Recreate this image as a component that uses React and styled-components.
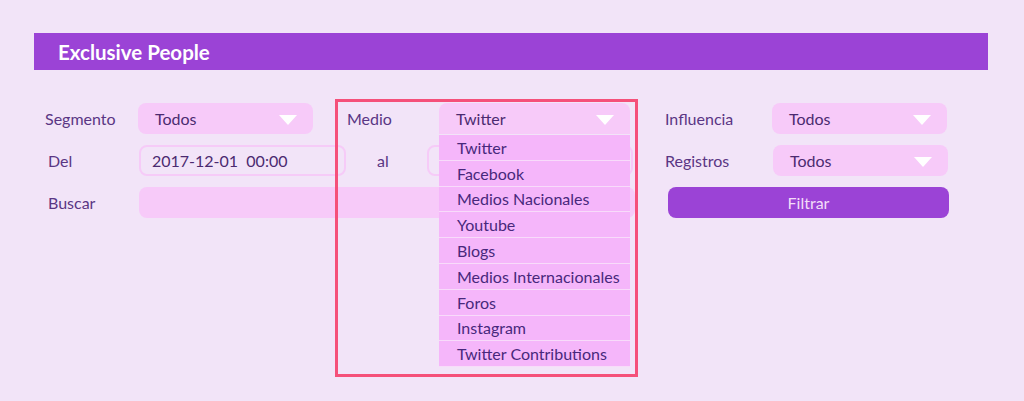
import styled, { createGlobalStyle } from "styled-components";

const GlobalStyle = createGlobalStyle`
  html, body {
    margin: 0;
    padding: 0;
    background: #f2e4f8;
    font-family: Lato, "Open Sans", sans-serif;
  }
`;

const medios = [
  "Twitter",
  "Facebook",
  "Medios Nacionales",
  "Youtube",
  "Blogs",
  "Medios Internacionales",
  "Foros",
  "Instagram",
  "Twitter Contributions",
];

const Page = styled.div`
  position: relative;
  width: 1024px;
  height: 401px;
  padding-top: 33px;
  box-sizing: border-box;
`;

const TitleBar = styled.div`
  margin: 0 36px 0 34px;
  height: 37px;
  background: #9b43d6;
  color: #fff;
  font-weight: 700;
  font-size: 20.5px;
  display: flex;
  align-items: center;
  padding-left: 24px;
`;

const Form = styled.div`
  margin-top: 33px;
  display: flex;
  flex-direction: column;
  gap: 11px;
`;

const Row = styled.div`
  display: flex;
  align-items: center;
  height: 31px;
  padding-left: ${(p) => p.$left || 45}px;
`;

const Label = styled.div`
  width: ${(p) => p.$w}px;
  margin-left: ${(p) => p.$ml || 0}px;
  color: #5a3684;
  font-size: 16px;
  flex-shrink: 0;
`;

const Select = styled.div`
  position: relative;
  width: ${(p) => p.$w}px;
  height: 31px;
  box-sizing: border-box;
  background: #f7caf9;
  border-radius: ${(p) => (p.$open ? "8px 8px 0 0" : "8px")};
  display: flex;
  align-items: center;
  padding-left: 17px;
  color: #4b2a70;
  font-size: 16px;
  flex-shrink: 0;
`;

const Arrow = styled.span`
  position: absolute;
  right: 16px;
  top: 12px;
  width: 0;
  height: 0;
  border-left: 9px solid transparent;
  border-right: 9px solid transparent;
  border-top: 10px solid #fff;
`;

const Input = styled.div`
  width: ${(p) => p.$w}px;
  height: 31px;
  box-sizing: border-box;
  border-radius: 8px;
  border: ${(p) => (p.$filled ? "none" : "2px solid #f6cbf8")};
  background: ${(p) => (p.$filled ? "#f7caf9" : "transparent")};
  display: flex;
  align-items: center;
  padding-left: 11px;
  color: #4b2a70;
  font-size: 16px;
  flex-shrink: 0;
  white-space: pre;
`;

const Button = styled.div`
  width: 281px;
  height: 31px;
  margin-left: ${(p) => p.$ml}px;
  border-radius: 8px;
  background: #9b43d6;
  color: #f3dcf8;
  font-size: 16px;
  display: flex;
  align-items: center;
  justify-content: center;
`;

const List = styled.div`
  position: absolute;
  left: 439px;
  top: 135px;
  width: 191px;
  z-index: 2;
`;

const Item = styled.div`
  height: 24.8px;
  border-bottom: 1px solid #f8dbfa;
  background: #f5b6fa;
  color: #48287c;
  font-size: 16px;
  padding-left: 18px;
  display: flex;
  align-items: center;
`;

const Highlight = styled.div`
  position: absolute;
  left: 335px;
  top: 99px;
  width: 303px;
  height: 278px;
  box-sizing: border-box;
  border: 3px solid #f5507a;
  z-index: 3;
  pointer-events: none;
`;

export default function App() {
  return (
    <>
      <GlobalStyle />
      <Page>
        <TitleBar>Exclusive People</TitleBar>
        <Form>
          <Row>
            <Label $w={93}>Segmento</Label>
            <Select $w={175}>
              Todos
              <Arrow />
            </Select>
            <Label $w={92} $ml={34}>Medio</Label>
            <Select $w={191} $open>
              Twitter
              <Arrow />
            </Select>
            <Label $w={107} $ml={35}>Influencia</Label>
            <Select $w={175}>
              Todos
              <Arrow />
            </Select>
          </Row>
          <Row $left={48}>
            <Label $w={91}>Del</Label>
            <Input $w={207}>2017-12-01  00:00</Input>
            <Label $w={50} $ml={31}>al</Label>
            <Input $w={206} />
            <Label $w={108} $ml={32}>Registros</Label>
            <Select $w={175}>
              Todos
              <Arrow />
            </Select>
          </Row>
          <Row $left={48}>
            <Label $w={91}>Buscar</Label>
            <Input $w={496} $filled />
            <Button $ml={33}>Filtrar</Button>
          </Row>
        </Form>
        <List>
          {medios.map((m) => (
            <Item key={m}>{m}</Item>
          ))}
        </List>
        <Highlight />
      </Page>
    </>
  );
}
